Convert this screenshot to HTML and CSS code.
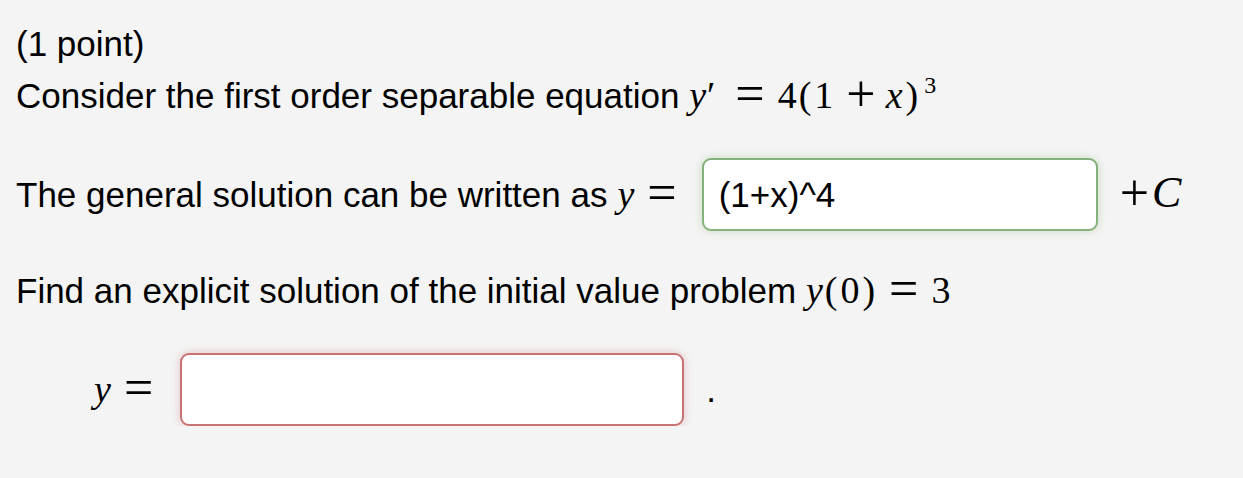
FILE: index.html
```html
<!DOCTYPE html>
<html lang="en">
<head>
  <meta charset="UTF-8" />
  <title>Problem</title>
  <link rel="stylesheet" href="styles.css">
</head>
<body>
  <div class="problem">
    <div class="row points">(1 point)</div>
    <div class="row intro">
      Consider the first order separable equation <span class="math"><i class="mi">y</i><span class="prime">&prime;</span><span class="mo rel after-prime">=</span>4<span class="po">(</span>1<span class="mo bin">+</span><i class="mi">x</i><span class="pc">)</span><sup>3</sup></span>
    </div>

    <div class="answer-row general">
      <span class="label">The general solution can be written as</span>
      <span class="math lead"><i class="mi">y</i><span class="mo rel">=</span></span>
      <input type="text" class="answer correct" value="(1+x)^4">
      <span class="math plus-c"><span class="mo bin-lead">+</span><i class="mi">C</i></span>
    </div>

    <div class="row find">
      Find an explicit solution of the initial value problem <span class="math"><i class="mi">y</i><span class="po">(</span>0<span class="pc">)</span><span class="mo rel">=</span>3</span>
    </div>

    <div class="answer-row explicit">
      <span class="math"><i class="mi">y</i><span class="mo rel">=</span></span>
      <input type="text" class="answer wrong" value="">
      <span class="dot">.</span>
    </div>
  </div>
</body>
</html>
```

FILE: styles.css
```css
html, body {
  margin: 0;
  padding: 0;
  background-color: #f4f4f4;
  color: black;
  font-family: "Liberation Sans", Arial, sans-serif;
  font-size: 35px;
}

.problem {
  padding: 24px 0 0 16px;
}

.row {
  height: 40px;
  line-height: 40px;
  white-space: nowrap;
}

.intro {
  margin-top: 12px;
}

.find {
  margin-top: 40px;
}

/* math bits, stand-in for the TeX output */
.math {
  font-family: "Liberation Serif", "Times New Roman", serif;
  font-size: 38px;
  line-height: 0;
  white-space: nowrap;
}

.mi {
  font-style: italic;
}

.prime {
  margin-left: 1px;
}

.mo {
  font-size: 52px;
  line-height: 0;
}

.rel {
  margin: 0 13px 0 13px;
  vertical-align: -3px;
}

.rel.after-prime {
  margin-left: 20px;
}

.bin,
.bin-lead {
  vertical-align: -3px;
}

.bin {
  margin: 0 10px 0 13px;
}

.po {
  margin: 0 3px 0 2px;
}

.pc {
  margin: 0 1px 0 3px;
}

.math sup {
  font-size: 24px;
  line-height: 0;
  vertical-align: 15px;
  margin-left: 5px;
}

.answer-row {
  display: flex;
  align-items: baseline;
  height: 73px;
  white-space: nowrap;
}

.general {
  margin-top: 42px;
}

.explicit {
  margin-top: 42px;
  padding-left: 78px;
}

.lead {
  margin-left: 10px;
}

.answer {
  box-sizing: border-box;
  height: 73px;
  width: 504px;
  margin-left: 12px;
  padding: 0 15px;
  border: 2px solid #c87373;
  border-radius: 9px;
  background-color: white;
  font-family: "Liberation Sans", Arial, sans-serif;
  font-size: 35px;
  color: black;
  outline: none;
  box-shadow: 0 0 9px rgba(200, 115, 115, 0.4);
}

.answer.wrong {
  margin-left: 14px;
}

.answer.correct {
  width: 396px;
  border-color: #86b27a;
  box-shadow: 0 0 9px rgba(134, 178, 122, 0.4);
}

.plus-c {
  margin-left: 22px;
}

.plus-c .mi {
  font-size: 44px;
  margin-left: 3px;
}

.dot {
  margin-left: 22px;
}
```
